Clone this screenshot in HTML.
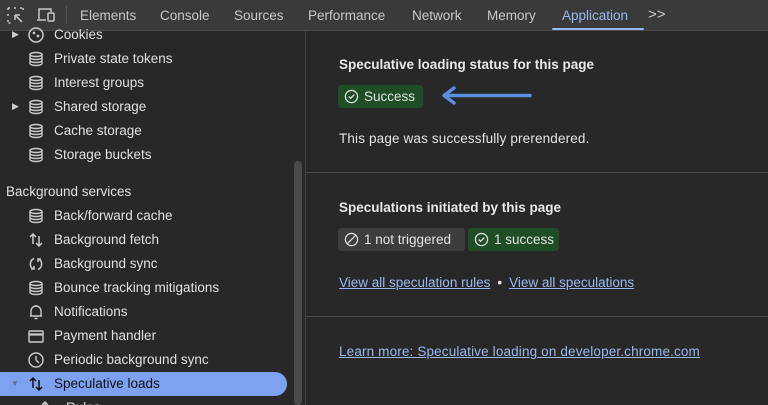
<!DOCTYPE html>
<html><head><style>
html,body{margin:0;width:768px;height:405px;overflow:hidden}
body{background:#282828;font-family:"Liberation Sans",sans-serif;color:#e3e3e3;font-size:13px;position:relative}
.tb{position:absolute;left:0;top:0;width:768px;height:30px;background:#3a3a3a;border-bottom:1px solid #4a4a4a}
.tab{position:absolute;top:8px;font-size:13.5px;color:#c8c8c8}
.side{position:absolute;left:0;top:31px;width:305px;height:374px;background:#282828;border-right:1px solid #444}
.it{position:absolute;left:54px;font-size:13.5px;color:#e0e0e0;margin-top:1px}
.ic{position:absolute;left:28px;width:16px;height:16px;margin-top:1px}
.sel{position:absolute;left:0;top:372px;width:287px;height:24px;background:#7ca1ef;border-radius:0 12px 12px 0}
.h{position:absolute;left:339px;font-weight:bold;font-size:13.5px;color:#e8e8e8}
.badge{position:absolute;height:23px;border-radius:3px;font-size:13.5px;line-height:23px;box-sizing:border-box;padding-left:26px}
.g{background:#1f4d25;color:#e3e3e3}
.gr{background:#3d3d3d;color:#e3e3e3}
a{color:#9ab8f0;text-decoration:underline}
.hr{position:absolute;left:306px;width:462px;height:1px;background:#4a4a4a}
</style></head><body>
<div class="tb">
<svg style="position:absolute;left:7px;top:7px" width="18" height="17" viewBox="0 0 18 17" fill="none" stroke="#c8c8c8" stroke-width="1.5"><path d="M1 1h3M7 1h3M13 1h3M1 1v3M1 7v3M1 13v3h3M16 1v3" stroke-dasharray="2 1.5"/><path d="M8 8l7 7M8 8h5M8 8v5"/></svg>
<svg style="position:absolute;left:36px;top:7px" width="20" height="16" viewBox="0 0 20 16" fill="none" stroke="#c8c8c8" stroke-width="1.5"><path d="M3 12V2h12v3M1 13h9"/><rect x="12" y="6" width="6" height="8" rx="1"/></svg>
<div style="position:absolute;left:66px;top:6px;width:1px;height:18px;background:#555"></div>
<span class="tab" style="left:80px">Elements</span>
<span class="tab" style="left:160px">Console</span>
<span class="tab" style="left:234px">Sources</span>
<span class="tab" style="left:308px">Performance</span>
<span class="tab" style="left:412px">Network</span>
<span class="tab" style="left:487px">Memory</span>
<span class="tab" style="left:562px;color:#9ab8f0">Application</span>
<div style="position:absolute;left:552px;top:28px;width:92px;height:2px;background:#9ab8f0;border-radius:2px"></div>
<span class="tab" style="left:648px;top:6px;font-size:15px">&gt;&gt;</span>
</div>
<div class="side">
<div style="position:absolute;left:294px;top:130px;width:8px;height:244px;background:#4a4a4a;border-radius:4px"></div>
</div>
<div class="sel"></div>
<span style="position:absolute;left:12px;top:29px;font-size:9px;color:#ccc">▶</span>
<svg class="ic" style="top:26px" viewBox="0 0 16 16" fill="none" stroke="#ccc" stroke-width="1.5"><circle cx="8" cy="8" r="7"/><circle cx="6" cy="6" r="0.6"/><circle cx="10" cy="9" r="0.6"/></svg>
<span class="it" style="top:26px">Cookies</span>
<svg class="ic" style="top:50px" viewBox="0 0 16 16" fill="none" stroke="#ccc" stroke-width="1.4"><ellipse cx="8" cy="3.5" rx="6" ry="2"/><path d="M2 3.5v9c0 1.1 2.7 2 6 2s6-.9 6-2v-9M2 6.5c0 1.1 2.7 2 6 2s6-.9 6-2M2 9.5c0 1.1 2.7 2 6 2s6-.9 6-2"/></svg>
<span class="it" style="top:50px">Private state tokens</span>
<svg class="ic" style="top:74px" viewBox="0 0 16 16" fill="none" stroke="#ccc" stroke-width="1.4"><ellipse cx="8" cy="3.5" rx="6" ry="2"/><path d="M2 3.5v9c0 1.1 2.7 2 6 2s6-.9 6-2v-9M2 6.5c0 1.1 2.7 2 6 2s6-.9 6-2M2 9.5c0 1.1 2.7 2 6 2s6-.9 6-2"/></svg>
<span class="it" style="top:74px">Interest groups</span>
<span style="position:absolute;left:12px;top:101px;font-size:9px;color:#ccc">▶</span>
<svg class="ic" style="top:98px" viewBox="0 0 16 16" fill="none" stroke="#ccc" stroke-width="1.4"><ellipse cx="8" cy="3.5" rx="6" ry="2"/><path d="M2 3.5v9c0 1.1 2.7 2 6 2s6-.9 6-2v-9M2 6.5c0 1.1 2.7 2 6 2s6-.9 6-2M2 9.5c0 1.1 2.7 2 6 2s6-.9 6-2"/></svg>
<span class="it" style="top:98px">Shared storage</span>
<svg class="ic" style="top:122px" viewBox="0 0 16 16" fill="none" stroke="#ccc" stroke-width="1.4"><ellipse cx="8" cy="3.5" rx="6" ry="2"/><path d="M2 3.5v9c0 1.1 2.7 2 6 2s6-.9 6-2v-9M2 6.5c0 1.1 2.7 2 6 2s6-.9 6-2M2 9.5c0 1.1 2.7 2 6 2s6-.9 6-2"/></svg>
<span class="it" style="top:122px">Cache storage</span>
<svg class="ic" style="top:146px" viewBox="0 0 16 16" fill="none" stroke="#ccc" stroke-width="1.4"><ellipse cx="8" cy="3.5" rx="6" ry="2"/><path d="M2 3.5v9c0 1.1 2.7 2 6 2s6-.9 6-2v-9M2 6.5c0 1.1 2.7 2 6 2s6-.9 6-2M2 9.5c0 1.1 2.7 2 6 2s6-.9 6-2"/></svg>
<span class="it" style="top:146px">Storage buckets</span>
<span class="it" style="left:6px;top:183px">Background services</span>
<svg class="ic" style="top:207px" viewBox="0 0 16 16" fill="none" stroke="#ccc" stroke-width="1.4"><ellipse cx="8" cy="3.5" rx="6" ry="2"/><path d="M2 3.5v9c0 1.1 2.7 2 6 2s6-.9 6-2v-9M2 6.5c0 1.1 2.7 2 6 2s6-.9 6-2M2 9.5c0 1.1 2.7 2 6 2s6-.9 6-2"/></svg>
<span class="it" style="top:207px">Back/forward cache</span>
<svg class="ic" style="top:231px" viewBox="0 0 16 16" fill="none" stroke="#ccc" stroke-width="1.5"><path d="M5 12V2M2 5l3-3 3 3M11 4v10M8 11l3 3 3-3"/></svg>
<span class="it" style="top:231px">Background fetch</span>
<svg class="ic" style="top:255px" viewBox="0 0 16 16" fill="none" stroke="#ccc" stroke-width="1.5"><path d="M6 2.5A6 6 0 0 0 5 13M10 13.5A6 6 0 0 0 11 3M3 13h3v-3M13 3h-3v3"/></svg>
<span class="it" style="top:255px">Background sync</span>
<svg class="ic" style="top:279px" viewBox="0 0 16 16" fill="none" stroke="#ccc" stroke-width="1.4"><ellipse cx="8" cy="3.5" rx="6" ry="2"/><path d="M2 3.5v9c0 1.1 2.7 2 6 2s6-.9 6-2v-9M2 6.5c0 1.1 2.7 2 6 2s6-.9 6-2M2 9.5c0 1.1 2.7 2 6 2s6-.9 6-2"/></svg>
<span class="it" style="top:279px">Bounce tracking mitigations</span>
<svg class="ic" style="top:303px" viewBox="0 0 16 16" fill="none" stroke="#ccc" stroke-width="1.4"><path d="M3 12V7a5 5 0 0 1 10 0v5M2 12h12M6.5 14.5h3M8 1v1"/></svg>
<span class="it" style="top:303px">Notifications</span>
<svg class="ic" style="top:327px" viewBox="0 0 16 16" fill="none" stroke="#ccc" stroke-width="1.4"><rect x="1" y="3" width="14" height="11" rx="1"/><path d="M1 6.5h14" stroke-width="2.2"/></svg>
<span class="it" style="top:327px">Payment handler</span>
<svg class="ic" style="top:351px" viewBox="0 0 16 16" fill="none" stroke="#ccc" stroke-width="1.4"><circle cx="8" cy="8" r="7"/><path d="M8 4v4l3 3"/></svg>
<span class="it" style="top:351px">Periodic background sync</span>
<span style="position:absolute;left:11px;top:379px;font-size:8px;color:#5b6e98">▼</span>
<svg class="ic" style="top:375px" viewBox="0 0 16 16" fill="none" stroke="#111" stroke-width="1.5"><path d="M5 12V2M2 5l3-3 3 3M11 4v10M8 11l3 3 3-3"/></svg>
<span class="it" style="top:375px;color:#111">Speculative loads</span>
<svg class="ic" style="top:399px;left:40px" viewBox="0 0 16 16" fill="none" stroke="#ccc" stroke-width="1.5"><path d="M5 12V2M2 5l3-3 3 3"/></svg>
<span class="it" style="top:399px;left:66px">Rules</span>
<div class="h" style="top:57px">Speculative loading status for this page</div>
<div class="badge g" style="left:338px;top:85px;width:85px">Success</div>
<svg style="position:absolute;left:344px;top:89px" width="15" height="15" viewBox="0 0 16 16" fill="none" stroke="#ddd" stroke-width="1.4"><circle cx="8" cy="8" r="6.5"/><path d="M5 8l2 2 4-4"/></svg>
<svg style="position:absolute;left:440px;top:86px" width="94" height="20" viewBox="0 0 94 20" fill="none" stroke="#5a8ee0" stroke-width="3.5" stroke-linecap="round" stroke-linejoin="round"><path d="M90 9.5H5M14 2L4 9.5 14 17"/></svg>
<div style="position:absolute;left:339px;top:131px;font-size:13.5px;letter-spacing:0.15px">This page was successfully prerendered.</div>
<div class="hr" style="top:172px"></div>
<div class="h" style="top:200px">Speculations initiated by this page</div>
<div class="badge gr" style="left:338px;top:228px;width:127px">1 not triggered</div>
<svg style="position:absolute;left:344px;top:232px" width="15" height="15" viewBox="0 0 16 16" fill="none" stroke="#ddd" stroke-width="1.4"><circle cx="8" cy="8" r="6.5"/><path d="M3.5 12.5l9-9"/></svg>
<div class="badge g" style="left:468px;top:228px;width:91px">1 success</div>
<svg style="position:absolute;left:474px;top:232px" width="15" height="15" viewBox="0 0 16 16" fill="none" stroke="#ddd" stroke-width="1.4"><circle cx="8" cy="8" r="6.5"/><path d="M5 8l2 2 4-4"/></svg>
<div style="position:absolute;left:339px;top:275px;font-size:13.5px"><a>View all speculation rules</a><span style="margin:0 7px">•</span><a>View all speculations</a></div>
<div class="hr" style="top:316px"></div>
<div style="position:absolute;left:339px;top:344px;font-size:13.5px;letter-spacing:0.15px"><a>Learn more: Speculative loading on developer.chrome.com</a></div>
</body></html>
